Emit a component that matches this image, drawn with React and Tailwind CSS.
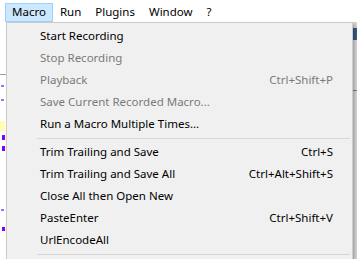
import React from "react";

const items = [
  { label: "Start Recording" },
  { label: "Stop Recording", disabled: true },
  { label: "Playback", shortcut: "Ctrl+Shift+P", disabled: true },
  { label: "Save Current Recorded Macro...", disabled: true },
  { label: "Run a Macro Multiple Times..." },
  { sep: true },
  { label: "Trim Trailing and Save", shortcut: "Ctrl+S" },
  { label: "Trim Trailing and Save All", shortcut: "Ctrl+Alt+Shift+S" },
  { label: "Close All then Open New" },
  { label: "PasteEnter", shortcut: "Ctrl+Shift+V" },
  { label: "UrlEncodeAll" },
  { sep: true },
];

const menus = ["Macro", "Run", "Plugins", "Window", "?"];

const App = () => {
  return (
    <div
      className="relative w-[357px] h-[259px] overflow-hidden bg-white text-[11.5px] text-black"
      style={{ fontFamily: '"Noto Sans", "Open Sans", sans-serif' }}
    >
      {/* menubar */}
      <div className="flex h-[22px] items-center pl-[5px] pt-[2px]">
        {menus.map((m, i) => (
          <div
            key={m}
            className={
              i === 0
                ? "h-[19px] px-[6px] flex items-center border border-[#99d1ff] bg-[#cce8ff]"
                : "h-[19px] px-[6px] flex items-center border border-transparent"
            }
          >
            {m}
          </div>
        ))}
      </div>

      {/* editor strip behind the menu */}
      <div className="absolute left-0 top-[22px] w-[8px] h-[237px] bg-white">
        <div className="mt-[52px] h-px bg-[#a0a0a0]" />
        <div className="mt-[10px] ml-[1px] w-[3px] h-[2px] bg-[#8080ff]" />
        <div className="mt-[12px] ml-[1px] w-[3px] h-[2px] bg-[#8080ff]" />
        <div className="mt-[20px] w-[5px] h-[10px] bg-[#ffffb0]" />
        <div className="mt-[4px] ml-[2px] w-[3px] h-[5px] bg-[#8000ff]" />
        <div className="mt-[6px] ml-[2px] w-[3px] h-[5px] bg-[#8000ff]" />
        <div className="mt-[58px] ml-[1px] w-[3px] h-[2px] bg-[#8080ff]" />
        <div className="mt-[16px] ml-[2px] w-[3px] h-[4px] bg-[#8000ff]" />
      </div>
      <div className="absolute right-0 top-[22px] w-[5px] h-[237px] bg-[#d8d8d8]">
        <div className="h-[12px] mt-[6px] bg-[#3c5a8a]" />
        <div className="mt-[50px] h-px bg-[#8a70a8]" />
      </div>

      {/* dropdown */}
      <div className="absolute left-[6px] top-[22px] w-[347px] h-[260px] border border-[#cccccc] bg-[#f0f0f0] pt-[2px] shadow-[2px_2px_3px_rgba(0,0,0,0.25)]">
        {items.map((it, i) =>
          it.sep ? (
            <div key={i} className="h-[6px] flex items-center pl-[30px] pr-[2px]">
              <div className="h-px w-full bg-[#d7d7d7]" />
            </div>
          ) : (
            <div
              key={i}
              className={
                "h-[22px] flex items-center justify-between pl-[33px] pr-[19px] " +
                (it.disabled ? "text-[#7a7a7a]" : "text-black")
              }
            >
              <span>{it.label}</span>
              {it.shortcut && <span>{it.shortcut}</span>}
            </div>
          )
        )}
      </div>
    </div>
  );
};

export default App;
